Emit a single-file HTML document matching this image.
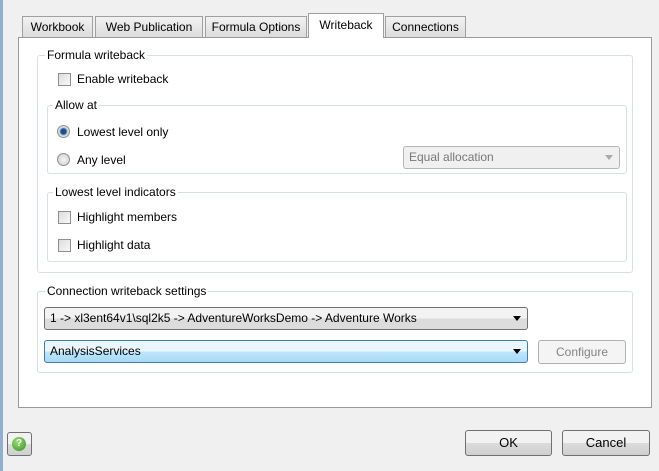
<!DOCTYPE html>
<html><head><style>
body{margin:0;width:659px;height:471px;background:#f0f0f0;font-family:"Liberation Sans",sans-serif;font-size:12px;color:#000;position:relative;overflow:hidden}
.a{position:absolute}
.tab{position:absolute;top:16px;height:21px;border:1px solid #a0a0a0;border-bottom:none;background:linear-gradient(#f2f2f2,#dcdcdc);line-height:21px;text-align:center;box-sizing:border-box}
.panel{left:18px;top:37px;width:634px;height:371px;background:#fff;border:1px solid #9a9a9a;box-sizing:border-box}
.grp{position:absolute;border:1px solid #d5dfe5;border-radius:3px;box-sizing:border-box}
.lbl{position:absolute;background:#fff;padding:0 2px;top:-9px;left:7px;line-height:16px}
.cb{position:absolute;width:13px;height:13px;border:1px solid #8f8f8f;background:linear-gradient(135deg,#ddd,#f8f8f8);box-sizing:border-box}
.rd{position:absolute;width:13px;height:13px;border-radius:50%;border:1px solid #8f8f8f;background:radial-gradient(#f4f4f4,#ccc);box-sizing:border-box}
.t{position:absolute;line-height:16px}
.dd{position:absolute;box-sizing:border-box;border:1px solid #707070;border-radius:3px;line-height:21px;padding-left:5px}
.arr{position:absolute;right:6px;top:8px;width:0;height:0;border-left:4px solid transparent;border-right:4px solid transparent;border-top:5px solid #000}
.btn{position:absolute;box-sizing:border-box;border:1px solid #707070;border-radius:3px;background:linear-gradient(#f2f2f2 50%,#dcdcdc 50%,#cfcfcf);text-align:center;line-height:24px;font-size:13px}
</style></head><body>
<div class="a" style="left:0;top:0;width:3px;height:471px;background:#8fb0d0"></div>
<div class="tab" style="left:22px;width:71px">Workbook</div>
<div class="tab" style="left:95px;width:108px">Web Publication</div>
<div class="tab" style="left:205px;width:102px">Formula Options</div>
<div class="tab" style="left:385px;width:81px">Connections</div>
<div class="a panel"></div>
<div class="tab" style="left:308px;top:13px;width:76px;height:25px;background:#fff;line-height:22px;z-index:2">Writeback</div>

<div class="grp" style="left:37px;top:55px;width:596px;height:218px"><div class="lbl">Formula writeback</div></div>
<div class="cb" style="left:58px;top:73px"></div><div class="t" style="left:77px;top:71px">Enable writeback</div>

<div class="grp" style="left:47px;top:105px;width:580px;height:69px"><div class="lbl" style="left:5px">Allow at</div></div>
<div class="rd" style="left:57px;top:125px;background:radial-gradient(#1c4f8a 30%,#6aa0d0 45%,#ddd 55%)"></div><div class="t" style="left:77px;top:124px">Lowest level only</div>
<div class="rd" style="left:57px;top:153px"></div><div class="t" style="left:77px;top:152px">Any level</div>
<div class="dd" style="left:403px;top:146px;width:217px;height:23px;background:#f0f0f0;border-color:#b5b5b5;color:#777">Equal allocation<div class="arr" style="border-top-color:#aaa"></div></div>

<div class="grp" style="left:47px;top:192px;width:580px;height:70px"><div class="lbl" style="left:5px">Lowest level indicators</div></div>
<div class="cb" style="left:58px;top:211px"></div><div class="t" style="left:77px;top:209px">Highlight members</div>
<div class="cb" style="left:58px;top:239px"></div><div class="t" style="left:77px;top:237px">Highlight data</div>

<div class="grp" style="left:37px;top:291px;width:596px;height:82px"><div class="lbl">Connection writeback settings</div></div>
<div class="dd" style="left:44px;top:307px;width:484px;height:23px;background:linear-gradient(#f2f2f2 50%,#dcdcdc 50%)">1 -&gt; xl3ent64v1\sql2k5 -&gt; AdventureWorksDemo -&gt; Adventure Works<div class="arr"></div></div>
<div class="dd" style="left:44px;top:340px;width:484px;height:23px;border-color:#3c7fb1;background:linear-gradient(#eaf6fd 50%,#bee6fd 50%,#a7d9f5)">AnalysisServices<div class="arr"></div></div>
<div class="btn" style="left:538px;top:340px;width:88px;height:24px;border-color:#adb2b5;background:#f4f4f4;color:#838383;line-height:22px;font-size:12px">Configure</div>

<div class="btn" style="left:7px;top:432px;width:25px;height:24px;border-radius:3px"></div>
<div class="a" style="left:12px;top:437px;width:14px;height:14px;border-radius:50%;background:radial-gradient(circle at 40% 35%,#9fe07a,#2e8f1c);color:#fff;font-size:10px;font-weight:bold;text-align:center;line-height:14px">?</div>
<div class="btn" style="left:465px;top:430px;width:87px;height:26px">OK</div>
<div class="btn" style="left:562px;top:430px;width:88px;height:26px">Cancel</div>
</body></html>
